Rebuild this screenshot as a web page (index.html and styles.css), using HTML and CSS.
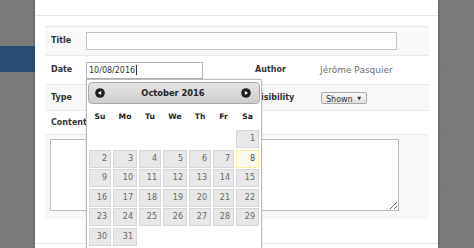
FILE: index.html
```html
<!DOCTYPE html>
<html>
<head>
<meta charset="utf-8">
<link rel="stylesheet" href="styles.css">
</head>
<body>
<div class="screen">
  <div class="backdrop-left"><div class="stripe"></div></div>
  <div class="modal">
    <div class="modal-header"></div>
    <div class="modal-body">
      <div class="row row-alt row-title">
        <div class="label">Title</div>
        <div class="field span3"><input class="text title-input" type="text"></div>
      </div>
      <div class="row row-date">
        <div class="label">Date</div>
        <div class="field"><div class="text date-input">10/08/2016<span class="caret"></span></div></div>
        <div class="label">Author</div>
        <div class="value">Jérôme Pasquier</div>
      </div>
      <div class="row row-alt row-type">
        <div class="label">Type</div>
        <div class="field"></div>
        <div class="label">Visibility</div>
        <div class="field"><div class="select">Shown <span class="arrow">▼</span></div></div>
      </div>
      <div class="row row-content">
        <div class="label">Content</div>
      </div>
      <div class="row-area row-alt">
        <textarea class="area"></textarea>
      </div>
    </div>
    <div class="modal-footer"></div>
  </div>
  <div class="backdrop-right">
    <div class="ghost g1"></div>
    <div class="ghost g2"></div>
    <div class="ghost g3"></div>
  </div>

  <div class="datepicker">
    <div class="dp-header">
      <svg class="dp-nav" width="10" height="10" viewBox="0 0 10 10"><circle cx="5" cy="5" r="4.8" fill="#1e1e1e"/><path d="M2.8 5 L6.2 2.9 L6.2 7.1 Z" fill="#fff"/></svg>
      <span class="dp-title">October 2016</span>
      <svg class="dp-nav" width="10" height="10" viewBox="0 0 10 10"><circle cx="5" cy="5" r="4.8" fill="#1e1e1e"/><path d="M7.2 5 L3.8 2.9 L3.8 7.1 Z" fill="#fff"/></svg>
    </div>
    <div class="dp-days">
      <span>Su</span><span>Mo</span><span>Tu</span><span>We</span><span>Th</span><span>Fr</span><span>Sa</span>
    </div>
    <div class="dp-grid">
      <span class="empty"></span><span class="empty"></span><span class="empty"></span><span class="empty"></span><span class="empty"></span><span class="empty"></span><a>1</a>
      <a>2</a><a>3</a><a>4</a><a>5</a><a>6</a><a>7</a><a class="hl">8</a>
      <a>9</a><a>10</a><a>11</a><a>12</a><a>13</a><a>14</a><a>15</a>
      <a>16</a><a>17</a><a>18</a><a>19</a><a>20</a><a>21</a><a>22</a>
      <a>23</a><a>24</a><a>25</a><a>26</a><a>27</a><a>28</a><a>29</a>
      <a>30</a><a>31</a>
    </div>
  </div>
</div>
</body>
</html>
```

FILE: styles.css
```css
* { box-sizing: border-box; }
html, body { margin: 0; padding: 0; }
body {
  width: 474px;
  height: 248px;
  overflow: hidden;
  background: #7b7b7b;
  font-family: "DejaVu Sans", sans-serif;
}
.screen {
  position: relative;
  display: flex;
  width: 474px;
  height: 248px;
  overflow: hidden;
}
.backdrop-left {
  width: 35px;
  flex: none;
  padding-top: 46px;
}
.stripe {
  height: 26px;
  background: #284e72;
}
.modal {
  width: 403px;
  flex: none;
  background: #fff;
  box-shadow: 0 0 3px rgba(0, 0, 0, 0.35);
  display: flex;
  flex-direction: column;
}
.modal-header {
  height: 16px;
  border-bottom: 1px solid #e6e6e6;
}
.modal-body {
  padding: 10px 9px 24px 10px;
}
.modal-footer {
  border-top: 1px solid #e6e6e6;
  flex: 1;
}
.row {
  display: grid;
  grid-template-columns: 41px 163px 71px 1fr;
  align-items: center;
  border-top: 1px solid #e8e8e8;
}
.row-alt { background: #f8f8f8; }
.row-title { height: 29px; }
.row-date { height: 29px; }
.row-type { height: 26px; }
.row-content { height: 24px; }
.row-area {
  height: 85px;
  border-top: 1px solid #e8e8e8;
  padding: 4px 0 0 5px;
}
.label {
  padding-left: 6px;
  padding-bottom: 1px;
  font-weight: bold;
  font-size: 8px;
  color: #333;
  white-space: nowrap;
}
.span3 { grid-column: 2 / 5; }
.text {
  display: block;
  border: 1px solid #c2c2c2;
  background: #fff;
  font-family: "DejaVu Sans", sans-serif;
  font-size: 8px;
  color: #333;
  margin: 0;
}
.title-input {
  width: 311px;
  height: 18px;
  padding: 0 2px;
}
.date-input {
  width: 117px;
  height: 17px;
  padding-left: 2px;
  display: flex;
  align-items: center;
  border-color: #b5b5b5;
}
.caret {
  display: inline-block;
  width: 1px;
  height: 10px;
  background: #333;
  margin-left: 1px;
}
.value {
  font-size: 9px;
  color: #707070;
  white-space: nowrap;
}
.select {
  margin-left: 1px;
  width: 46px;
  height: 12px;
  border: 1px solid #a8a8a8;
  border-radius: 2px;
  background: linear-gradient(#f8f8f8, #e2e2e2);
  font-size: 8px;
  line-height: 10px;
  color: #333;
  padding-left: 4px;
  white-space: nowrap;
}
.arrow {
  font-size: 5px;
  vertical-align: 2px;
  margin-left: 2px;
}
.area {
  display: block;
  width: 349px;
  height: 72px;
  border: 1px solid #bdbdbd;
  margin: 0;
  background: #fff;
}
.backdrop-right {
  flex: 1;
  padding: 0 12px 0 2px;
}
.ghost { border-bottom: 1px solid #767676; }
.g1 { height: 72px; }
.g2 { height: 58px; }
.g3 { height: 56px; }

/* datepicker */
.datepicker {
  position: absolute;
  left: 86px;
  top: 79px;
  width: 176px;
  padding: 2px 1px 2px;
  border: 1px solid #bdbdbd;
  background: #fff;
  box-shadow: 0 0 2px rgba(0, 0, 0, 0.15);
}
.dp-header {
  height: 22px;
  border: 1px solid #aaa;
  border-radius: 4px;
  background: linear-gradient(#e4e4e4, #cdcdcd);
  display: flex;
  align-items: center;
  justify-content: space-between;
  padding: 0 8px 0 6px;
}
.dp-title {
  font-weight: bold;
  font-size: 8.3px;
  color: #222;
}
.dp-days, .dp-grid {
  display: grid;
  grid-template-columns: 24px 26px 24px 26px 24px 23px 25px;
}
.dp-days {
  height: 25px;
  align-items: center;
}
.dp-days span {
  text-align: center;
  font-weight: bold;
  font-size: 7.6px;
  color: #222;
}
.dp-grid {
  padding-top: 1px;
  grid-auto-rows: 18px;
  row-gap: 1.5px;
}
.dp-grid a, .dp-grid .empty {
  margin: 0 1px;
}
.dp-grid a {
  display: block;
  border: 1px solid #d6d6d6;
  background: #e8e8e8;
  color: #666;
  font-size: 8px;
  line-height: 16px;
  text-align: right;
  padding-right: 3px;
}
.dp-grid a.hl {
  border-color: #fcefa1;
  background: #fbf9ee;
  color: #444;
}
```
